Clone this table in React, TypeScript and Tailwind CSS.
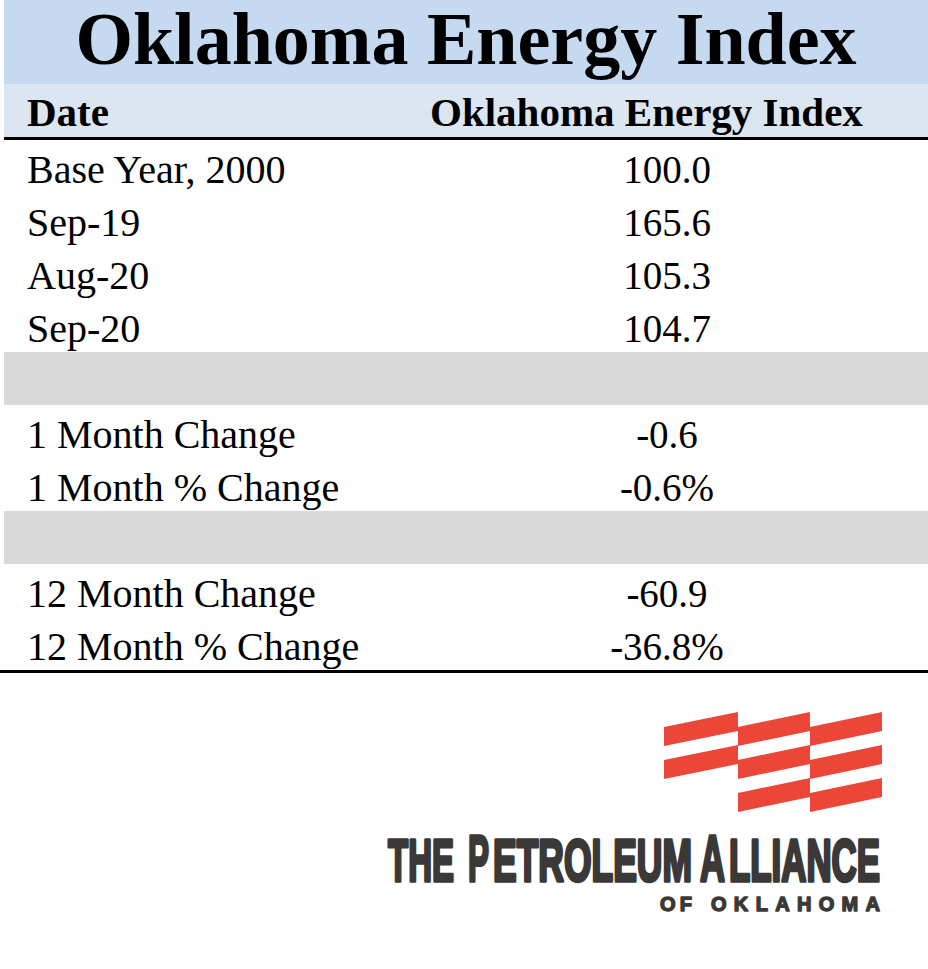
import React from "react";

const rows1 = [
  ["Base Year, 2000", "100.0"],
  ["Sep-19", "165.6"],
  ["Aug-20", "105.3"],
  ["Sep-20", "104.7"],
];
const rows2 = [
  ["1 Month Change", "-0.6"],
  ["1 Month % Change", "-0.6%"],
];
const rows3 = [
  ["12 Month Change", "-60.9"],
  ["12 Month % Change", "-36.8%"],
];

function Row({ label, value }: { label: string; value: string }) {
  return (
    <div className="grid grid-cols-[426px_474px] h-[53px] pt-[6px] items-center leading-[40px] text-black">
      <div className="pl-[23px] whitespace-nowrap text-[40px]">{label}</div>
      <div className="text-center whitespace-nowrap text-[39px]">{value}</div>
    </div>
  );
}

function Logo() {
  const red = "#ec4638";
  const cols: [number, number, number][] = [
    [278, 352, 2],
    [352, 424, 3],
    [424, 496, 3],
  ];
  const polys: string[] = [];
  cols.forEach(([x0, x1, n]) => {
    for (let k = 0; k < n; k++) {
      const o = 33 * k;
      polys.push(`${x0},${19 + o} ${x1},${4 + o} ${x1},${23 + o} ${x0},${38 + o}`);
    }
  });
  const dark = "#3b3937";
  const common = {
    fill: dark,
    stroke: dark,
    strokeLinejoin: "round" as const,
    fontFamily: "'Liberation Sans', Arial, sans-serif",
    fontWeight: 700,
    lengthAdjust: "spacingAndGlyphs" as const,
  };
  return (
    <svg width="497" height="212" viewBox="0 0 497 212">
      {polys.map((p, i) => (
        <polygon key={i} points={p} fill={red} />
      ))}
      <text x={2} y={173} fontSize={60} strokeWidth={3.5} textLength={66} {...common}>
        THE
      </text>
      <text x={82} y={173} fontSize={65} strokeWidth={3.5} textLength={21} {...common}>
        P
      </text>
      <text x={107} y={173} fontSize={60} strokeWidth={3.5} textLength={199} {...common}>
        ETROLEUM
      </text>
      <text x={314} y={173} fontSize={65} strokeWidth={3.5} textLength={25} {...common}>
        A
      </text>
      <text x={343} y={173} fontSize={60} strokeWidth={3.5} textLength={151} {...common}>
        LLIANCE
      </text>
      <text
        x={274}
        y={203}
        fontSize={20}
        strokeWidth={1.4}
        textLength={32}
        {...common}
        lengthAdjust="spacing"
      >
        OF
      </text>
      <text
        x={325}
        y={203}
        fontSize={20}
        strokeWidth={1.4}
        textLength={169}
        {...common}
        lengthAdjust="spacing"
      >
        OKLAHOMA
      </text>
    </svg>
  );
}

export default function App() {
  return (
    <div className="w-[928px] h-[969px] bg-white overflow-hidden font-['Liberation_Serif','Times_New_Roman',serif]">
      <div className="ml-[4px]">
        <div className="h-[84px] bg-[#c5d9f1] pt-[2px] text-center text-[74px] leading-[74px] font-bold text-black whitespace-nowrap">
          Oklahoma Energy Index
        </div>
        <div className="h-[56px] pt-[4px] bg-[#dce6f1] border-b-[3px] border-black grid grid-cols-[426px_474px] items-center text-[41px] leading-[41px] font-bold text-black">
          <div className="pl-[23px]">Date</div>
          <div className="whitespace-nowrap">Oklahoma Energy Index</div>
        </div>
        {rows1.map(([l, v]) => (
          <Row key={l} label={l} value={v} />
        ))}
        <div className="h-[53px] bg-[#d9d9d9]" />
        {rows2.map(([l, v]) => (
          <Row key={l} label={l} value={v} />
        ))}
        <div className="h-[53px] bg-[#d9d9d9]" />
        {rows3.map(([l, v]) => (
          <Row key={l} label={l} value={v} />
        ))}
      </div>
      <div className="h-[3px] bg-black" />
      <div className="mt-[35px] flex justify-end pr-[45px]">
        <Logo />
      </div>
    </div>
  );
}
